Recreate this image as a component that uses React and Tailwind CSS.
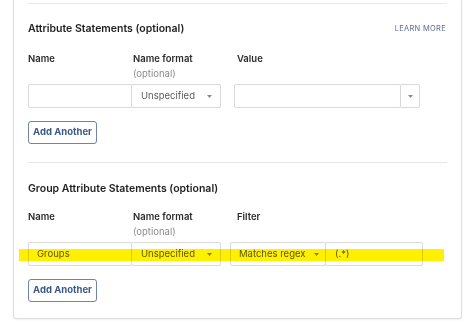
import React from 'react';

function Caret() {
  return (
    <svg width="5" height="3" viewBox="0 0 5 3" className="shrink-0">
      <path d="M0 0 L5 0 L2.5 3 Z" fill="#8a8a8a" />
    </svg>
  );
}

function Labels({ third }) {
  return (
    <div className="flex text-[9.5px] leading-[15px]">
      <div className="w-[105px] font-semibold text-[#2b2b2e]">Name</div>
      <div className="w-[104px]">
        <div className="font-semibold text-[#2b2b2e]">Name format</div>
        <div className="text-[#8c8c8c]">(optional)</div>
      </div>
      <div className="font-semibold text-[#2b2b2e]">{third}</div>
    </div>
  );
}

function AddAnother() {
  return (
    <div className="flex">
      <button className="h-[23px] w-[69px] rounded-[3px] border border-[#6f84a6] text-[9.5px] font-bold text-[#3c5887] bg-white">
        Add Another
      </button>
    </div>
  );
}

const box = 'h-[24px] border border-[#d9d9d9] rounded-[2px] bg-white flex items-center text-[9.5px] text-[#5c5c5c]';

export default function App() {
  return (
    <div className="w-[474px] h-[328px] overflow-hidden bg-white pl-[13px] pr-[12px]" style={{ fontFamily: 'Inter, "Liberation Sans", sans-serif' }}>
      <div className="border border-t-0 border-[#dedede] rounded-b-[3px] shadow-[0_1px_2px_rgba(0,0,0,0.06)] px-[14px] pt-[3px] pb-[16px]">
        <div className="border-t border-[#e9e9e9]" />

        <div className="mt-[18px] flex items-center justify-between h-[14px]">
          <div className="text-[10.5px] font-semibold text-[#1f1f22]">Attribute Statements (optional)</div>
          <div className="text-[7.5px] tracking-[0.3px] text-[#5d6c8c] mr-[1px]">LEARN MORE</div>
        </div>

        <div className="mt-[15px]">
          <Labels third="Value" />
        </div>

        <div className="mt-[3px] flex">
          <div className={`${box} w-[104px]`} />
          <div className={`${box} -ml-px w-[90px] justify-between pl-[9px] pr-[8px]`}>
            <span>Unspecified</span>
            <Caret />
          </div>
          <div className={`${box} ml-[13px] w-[167px]`} />
          <div className={`${box} -ml-px w-[20px] justify-center`}>
            <Caret />
          </div>
        </div>

        <div className="mt-[13px]">
          <AddAnother />
        </div>

        <div className="mt-[18px] border-t border-[#e6e6e6]" />

        <div className="mt-[19px] h-[14px] flex items-center text-[10.5px] font-semibold text-[#1f1f22]">
          Group Attribute Statements (optional)
        </div>

        <div className="mt-[13px]">
          <Labels third="Filter" />
        </div>

        <div className="relative mt-[3px] flex">
          <div className={`${box} w-[104px] pl-[8px]`}>Groups</div>
          <div className={`${box} -ml-px w-[90px] justify-between pl-[9px] pr-[8px]`}>
            <span>Unspecified</span>
            <Caret />
          </div>
          <div className={`${box} ml-[9px] w-[96px] justify-between pl-[8px] pr-[6px]`}>
            <span>Matches regex</span>
            <Caret />
          </div>
          <div className={`${box} -ml-px w-[98px] pl-[9px]`}>(.*)</div>
          <div className="absolute left-[-9px] top-[7px] w-[425px] h-[12px] bg-[#fff000] mix-blend-multiply" />
        </div>

        <div className="mt-[13px]">
          <AddAnother />
        </div>
      </div>
    </div>
  );
}
